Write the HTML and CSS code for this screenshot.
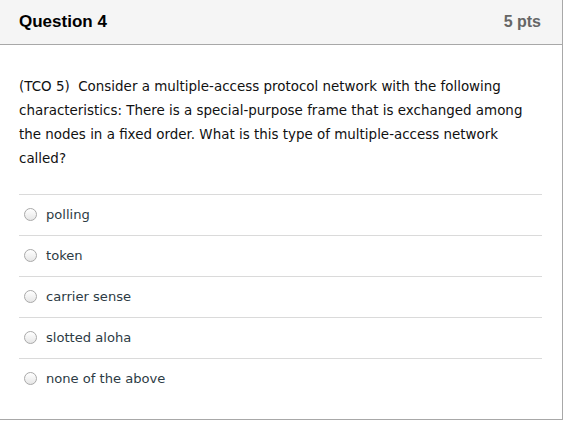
FILE: index.html
```html
<!DOCTYPE html>
<html>
<head>
<meta charset="utf-8">
<link rel="stylesheet" href="styles.css">
</head>
<body>
<div class="question">
  <div class="header">
    <span class="title">Question 4</span>
    <span class="pts">5 pts</span>
  </div>
  <div class="content">
    <p class="text">(TCO 5)&nbsp; Consider a multiple-access protocol network with the following characteristics: There is a special-purpose frame that is exchanged among the nodes in a fixed order. What is this type of multiple-access network called?</p>
    <ul class="answers">
      <li class="answer"><span class="radio"></span><span class="label">polling</span></li>
      <li class="answer"><span class="radio"></span><span class="label">token</span></li>
      <li class="answer"><span class="radio"></span><span class="label">carrier sense</span></li>
      <li class="answer"><span class="radio"></span><span class="label">slotted aloha</span></li>
      <li class="answer"><span class="radio"></span><span class="label">none of the above</span></li>
    </ul>
  </div>
</div>
</body>
</html>
```
FILE: styles.css
```css
html, body {
  margin: 0;
  padding: 0;
  background: #fff;
}
.question {
  width: 562px;
  height: 419px;
  border-right: 1px solid #a8a8a8;
  border-bottom: 1px solid #a8a8a8;
  display: flex;
  flex-direction: column;
}
.header {
  height: 44px;
  background: #f5f5f5;
  border-bottom: 1px solid #a8a8a8;
  display: flex;
  align-items: center;
  justify-content: space-between;
  padding: 0 21px 0 19px;
  font-family: "Liberation Sans", Arial, sans-serif;
  font-weight: bold;
}
.title {
  font-size: 17px;
  color: #000;
}
.pts {
  font-size: 16px;
  color: #666;
}
.content {
  padding: 30px 20px 0 19px;
}
.text {
  margin: 0;
  font-family: "DejaVu Sans", Verdana, sans-serif;
  font-size: 13.45px;
  line-height: 24px;
  color: #111;
}
.answers {
  list-style: none;
  margin: 23px 0 0 0;
  padding: 0;
}
.answer {
  height: 39px;
  padding-bottom: 1px;
  border-top: 1px solid #dadada;
  display: flex;
  align-items: center;
  font-family: "DejaVu Sans", Verdana, sans-serif;
  font-size: 13.1px;
  color: #2d3b45;
}
.radio {
  width: 11px;
  height: 11px;
  border-radius: 50%;
  border: 1px solid #a9a9a9;
  background: linear-gradient(#ffffff, #e6e6e6);
  margin: 0 9px 0 5px;
  flex: none;
}
```
